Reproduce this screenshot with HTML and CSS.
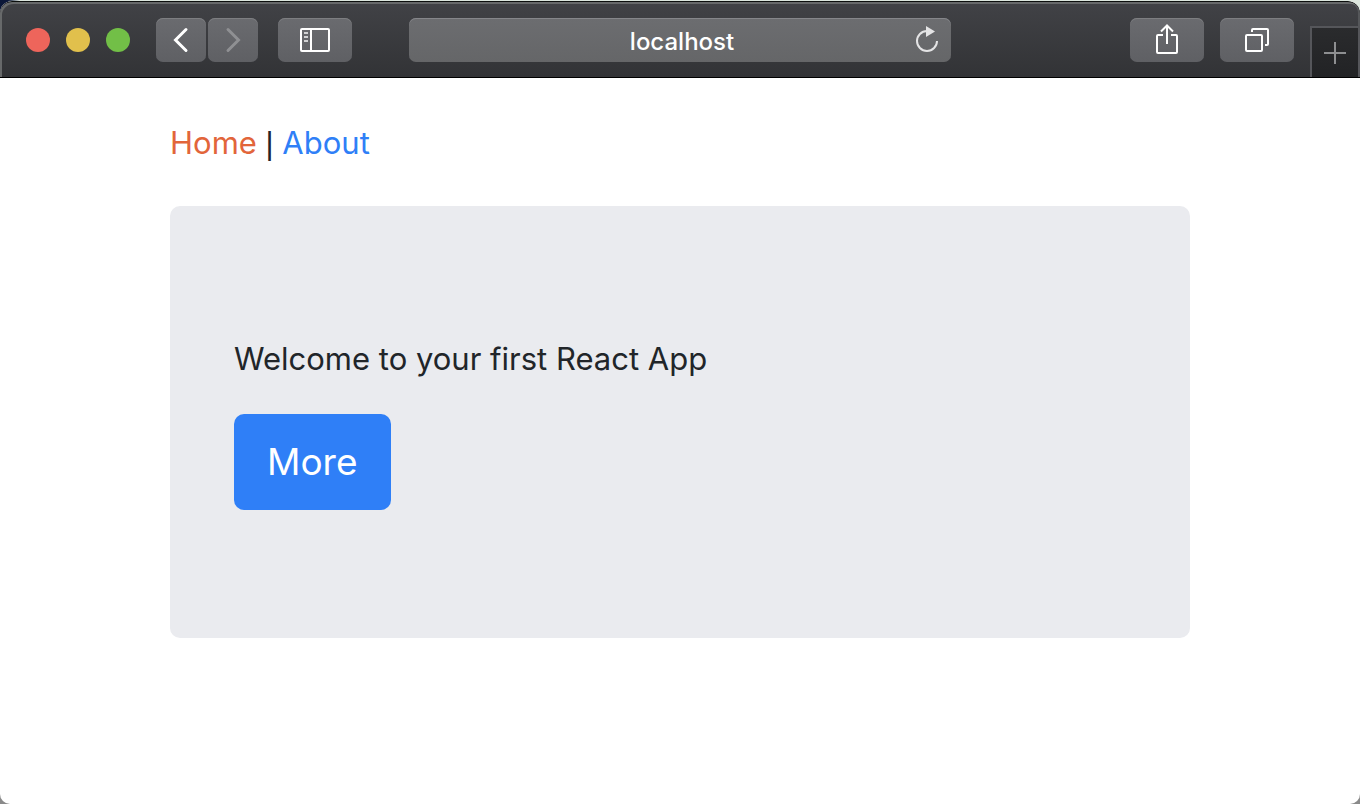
FILE: index.html
```
<!DOCTYPE html>
<html lang="en">
<head>
    <meta charset="UTF-8">
    <meta name="viewport" content="width=device-width, initial-scale=1.0">
    <title>React App</title>
    <link rel="stylesheet" href="styles.css">
</head>
<body>
    <div class="window">
        <header class="toolbar">
            <div class="toolbar-left">
                <div class="lights">
                    <button class="light red" aria-label="Close"></button>
                    <button class="light yellow" aria-label="Minimize"></button>
                    <button class="light green" aria-label="Zoom"></button>
                </div>
                <div class="history">
                    <button class="tool-btn small" aria-label="Back">
                        <svg width="16" height="26" viewBox="0 0 16 26"><path d="M13 2.5L2.5 13L13 23.5" fill="none" stroke="#fff" stroke-width="3" stroke-linecap="round"/></svg>
                    </button>
                    <button class="tool-btn small" aria-label="Forward">
                        <svg width="16" height="26" viewBox="0 0 16 26"><path d="M3 2.5L13.5 13L3 23.5" fill="none" stroke="#8f9093" stroke-width="3" stroke-linecap="round"/></svg>
                    </button>
                </div>
                <button class="tool-btn" aria-label="Sidebar">
                    <svg width="30" height="24" viewBox="0 0 30 24" fill="none" stroke="#fff" stroke-width="2">
                        <rect x="1" y="1" width="28" height="22" rx="1"/>
                        <path d="M11 1V23"/>
                        <path d="M4 5H8M4 9H8M4 13H8" stroke="#d2d2d4"/>
                    </svg>
                </button>
            </div>
            <div class="address">
                <input class="address-input" type="text" value="localhost" aria-label="Address">
                <button class="reload" aria-label="Reload">
                    <svg width="24" height="28" viewBox="0 0 24 28">
                        <path d="M22 15A10 10 0 1 1 12 5" fill="none" stroke="#e4e4e5" stroke-width="2"/>
                        <path d="M11 0L20 5.5L11 11Z" fill="#e4e4e5"/>
                    </svg>
                </button>
            </div>
            <div class="toolbar-right">
                <button class="tool-btn" aria-label="Share">
                    <svg width="22" height="32" viewBox="0 0 22 32" fill="none" stroke="#fff" stroke-width="2">
                        <path d="M7 11H2Q1 11 1 12V28Q1 29 2 29H20Q21 29 21 28V12Q21 11 20 11H15"/>
                        <path d="M11 20V2M5 7.500L11 1.500L17 7.500"/>
                    </svg>
                </button>
                <button class="tool-btn" aria-label="Show tabs">
                    <svg width="24" height="24" viewBox="0 0 24 24" fill="none" stroke="#fff" stroke-width="2">
                        <rect x="1" y="7" width="16" height="16" rx="1"/>
                        <path d="M7 4V2Q7 1 8 1H22Q23 1 23 2V16Q23 17 22 17H20"/>
                    </svg>
                </button>
                <button class="new-tab" aria-label="New tab">
                    <svg width="22" height="22" viewBox="0 0 22 22"><path d="M11 0V22M0 11H22" stroke="#8e8f91" stroke-width="2"/></svg>
                </button>
            </div>
        </header>
        <main class="container">
            <nav class="nav">
                <a class="active" href="#home">Home</a> <span class="divider">|</span> <a href="#about">About</a>
            </nav>
            <section class="jumbotron">
                <p class="lead">Welcome to your first React App</p>
                <a class="btn" href="#about">More</a>
            </section>
        </main>
    </div>
</body>
</html>
```
FILE: styles.css
```
* {
    box-sizing: border-box;
}
body {
    margin: 0;
    min-height: 100vh;
    padding-top: 1px;
    display: flex;
    background: linear-gradient(90deg, #0b1738 8px, #dce6dd 20px) top / 100% 20px no-repeat #8a8a8a;
    font-family: Inter, "Liberation Sans", sans-serif;
    font-size: 31px;
    line-height: 50px;
    color: #212529;
}
button {
    border: none;
    padding: 0;
    cursor: pointer;
}
svg {
    display: block;
}
.window {
    flex: 1;
    background: white;
    border-radius: 12px 12px 10px 10px;
    overflow: hidden;
}
.toolbar {
    display: grid;
    grid-template-columns: 1fr 40% 1fr;
    height: 77px;
    background: linear-gradient(#414246, #323336);
    border-top: 1px solid #0c0f0d;
    border-bottom: 1px solid #000;
    border-radius: 12px 12px 0 0;
    box-shadow: inset 2px 2px 0 #67696a, inset -2px 0 0 #55575a;
}
.toolbar-left {
    display: flex;
    align-items: center;
    gap: 20px;
    padding-left: 26px;
}
.lights {
    display: flex;
    gap: 16px;
    margin-right: 6px;
}
.light {
    width: 24px;
    height: 24px;
    border-radius: 50%;
}
.red {
    background: #ee655b;
}
.yellow {
    background: #e1c04c;
}
.green {
    background: #72bf47;
}
.history {
    display: flex;
    gap: 2px;
}
.tool-btn {
    display: flex;
    align-items: center;
    justify-content: center;
    width: 74px;
    height: 44px;
    border-radius: 7px;
    background: linear-gradient(#6a6b6f, #5f6064);
    box-shadow: inset 0 1px 0 #7d7e81;
}
.tool-btn.small {
    width: 50px;
}
.address {
    align-self: center;
    display: flex;
    align-items: center;
    margin: 0 1px;
    padding: 0 12px 0 16px;
    height: 44px;
    border-radius: 7px;
    background: linear-gradient(#6c6d70, #656668);
    box-shadow: inset 0 1px 0 #85868a;
}
.address-input {
    flex: 1;
    min-width: 0;
    padding: 3px 0 0 24px;
    border: none;
    outline: none;
    background: none;
    color: white;
    font-family: inherit;
    font-size: 24px;
    font-weight: 500;
    text-align: center;
}
.reload {
    background: none;
}
.toolbar-right {
    display: flex;
    align-items: center;
    justify-content: flex-end;
    gap: 16px;
}
.new-tab {
    display: flex;
    align-items: center;
    justify-content: center;
    align-self: flex-end;
    width: 50px;
    height: 51px;
    border: solid #55565a;
    border-width: 2px 2px 0 2px;
    background: linear-gradient(#2a2b2d, #222325);
}
.container {
    width: 75%;
    margin: 0 auto;
    padding: 40px 0;
}
.nav {
    margin-bottom: 38px;
}
.nav a {
    color: #2f7ff7;
    text-decoration: none;
}
.nav a.active {
    color: #e2653a;
}
.divider {
    font-family: "Liberation Sans", sans-serif;
    line-height: 1;
}
.jumbotron {
    padding: 128px 64px;
    border-radius: 10px;
    background: #eaebef;
}
.lead {
    margin: 0 0 30px;
}
.btn {
    display: inline-block;
    padding: 16px 33px;
    border-radius: 10px;
    background: #2f7ff7;
    color: white;
    font-size: 37px;
    line-height: 64px;
    text-decoration: none;
    vertical-align: top;
}
```
